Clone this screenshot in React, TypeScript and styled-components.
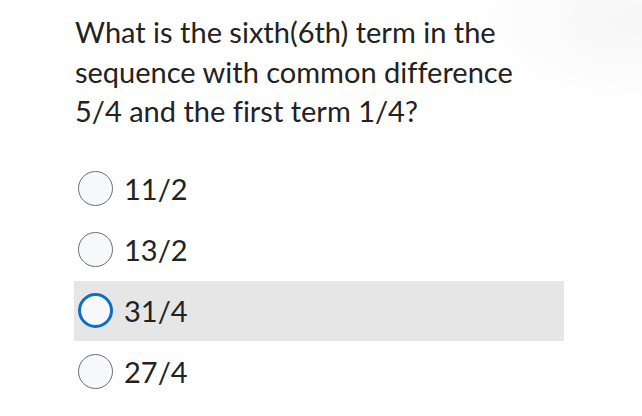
import React from 'react';
import styled, { createGlobalStyle } from 'styled-components';

const GlobalStyle = createGlobalStyle`
  html, body {
    margin: 0;
    padding: 0;
  }
  body {
    width: 642px;
    height: 416px;
    overflow: hidden;
    font-family: Lato, "Liberation Sans", sans-serif;
    font-variant-ligatures: none;
    background:
      radial-gradient(ellipse 180px 90px at 640px 20px, rgba(0, 0, 0, 0.035), rgba(0, 0, 0, 0)),
      #fff;
  }
`;

const Page = styled.div`
  padding: 12px 0 0 74px;
  width: 490px;
`;

const Question = styled.p`
  margin: 0 0 28px;
  padding-left: 1px;
  width: 450px;
  font-size: 29px;
  line-height: 39.5px;
  color: #222;
`;

const OptionList = styled.div`
  display: flex;
  flex-direction: column;
`;

const Option = styled.div<{ selected?: boolean }>`
  display: flex;
  align-items: center;
  gap: 11px;
  height: 60px;
  margin-bottom: 1px;
  padding-left: 4px;
  background: ${(p) => (p.selected ? '#e6e6e6' : 'transparent')};
`;

const Radio = styled.span<{ selected?: boolean }>`
  box-sizing: border-box;
  flex: none;
  width: 35px;
  height: 35px;
  border-radius: 50%;
  background: #f6f8fc;
  border: ${(p) => (p.selected ? '3.5px solid #0b6fc8' : '1.5px solid #6e6e6e')};
`;

const Label = styled.span`
  font-size: 29px;
  color: #222;
`;

const options = ['11/2', '13/2', '31/4', '27/4'];

export default function App() {
  return (
    <Page>
      <GlobalStyle />
      <Question>
        What is the sixth(6th) term in the sequence with common difference 5/4 and the first term 1/4?
      </Question>
      <OptionList>
        {options.map((o) => (
          <Option key={o} selected={o === '31/4'}>
            <Radio selected={o === '31/4'} />
            <Label>{o}</Label>
          </Option>
        ))}
      </OptionList>
    </Page>
  );
}
